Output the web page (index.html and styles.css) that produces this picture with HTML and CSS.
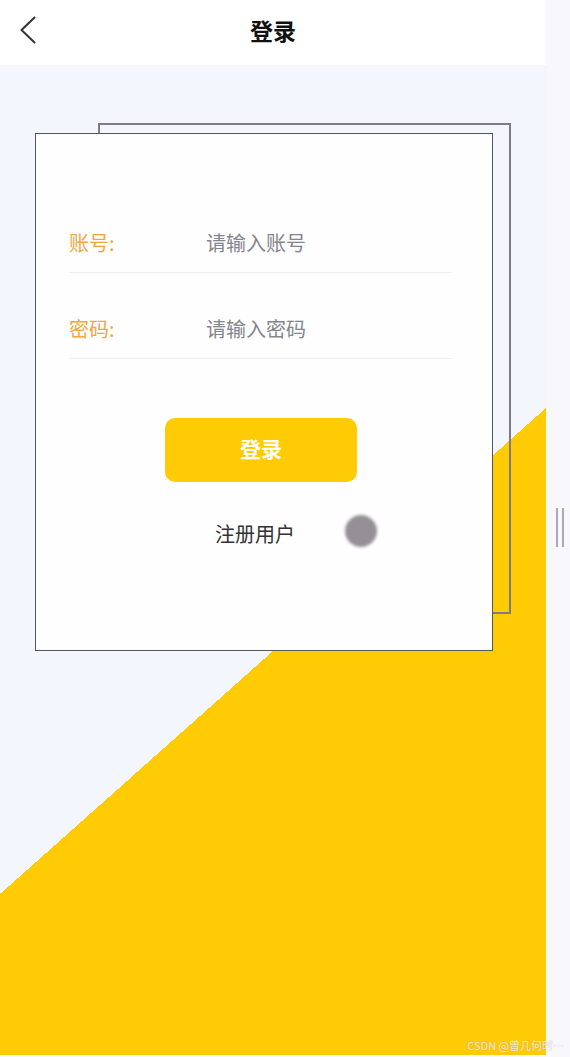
FILE: index.html
```html
<!DOCTYPE html>
<html lang="zh-CN">
<head>
<meta charset="utf-8">
<title>登录</title>
<link rel="stylesheet" href="styles.css">
</head>
<body>
<div class="page">
  <div class="app">
    <header class="header">
      <div class="back">
        <svg width="18" height="28" viewBox="0 0 18 28"><path d="M15.5 1.5 L2.5 14 L15.5 26.5" fill="none" stroke="#333" stroke-width="2" stroke-linecap="round" stroke-linejoin="round"/></svg>
      </div>
      <h1 class="title">登录</h1>
      <div></div>
    </header>
    <main class="content">
      <div class="stack">
        <div class="card-back"></div>
        <div class="card">
          <div class="form">
            <div class="row">
              <span class="label">账号:</span>
              <span class="placeholder">请输入账号</span>
            </div>
            <div class="row row-second">
              <span class="label">密码:</span>
              <span class="placeholder">请输入密码</span>
            </div>
            <button class="btn">登录</button>
            <div class="register">
              <span class="register-text">注册用户</span>
              <span class="dot"></span>
            </div>
          </div>
        </div>
      </div>
    </main>
  </div>
  <div class="side">
    <div class="handle"></div>
  </div>
  <div class="watermark">CSDN @曾几何时…</div>
</div>
</body>
</html>
```
FILE: styles.css
```css
* { box-sizing: border-box; }
html, body { margin: 0; padding: 0; }
body {
  background: #f7f7fc;
  font-family: "Noto Sans CJK SC", "Noto Sans", sans-serif;
  color: #333;
}
.page {
  position: relative;
  display: flex;
  width: 570px;
  height: 1057px;
  overflow: hidden;
}
.app {
  width: 546px;
  height: 1055px;
  display: flex;
  flex-direction: column;
}
.header {
  height: 65px;
  background: #ffffff;
  display: grid;
  grid-template-columns: 1fr auto 1fr;
  align-items: center;
}
.back {
  padding-left: 19px;
  display: flex;
  align-items: center;
  height: 28px;
  margin-top: -5px;
}
.title {
  margin: 0;
  font-size: 23px;
  font-weight: 700;
  color: #111;
  line-height: 1;
  margin-top: -5px;
}
.content {
  flex: 1;
  background:
    linear-gradient(to bottom right, rgba(255,204,0,0) 50%, #ffcb05 50%) no-repeat 0 343px / 546px 486px,
    linear-gradient(#ffcb05, #ffcb05) no-repeat 0 828px / 100% 100%,
    #f3f6fc;
}
.stack {
  position: relative;
  margin: 58px 0 0 35px;
  padding-top: 10px;
  width: 476px;
}
.card-back {
  position: absolute;
  left: 63px;
  top: 0;
  width: 413px;
  height: 491px;
  border: 2px solid #7c7c82;
}
.card {
  position: relative;
  width: 458px;
  height: 518px;
  background: #fefefe;
  border: 1px solid #55555c;
}
.form {
  padding: 78px 40px 0 33px;
}
.row {
  display: flex;
  align-items: center;
  height: 61px;
  border-bottom: 1px solid #eeeef2;
  font-size: 20px;
}
.row-second { margin-top: 25px; }
.label {
  width: 137px;
  color: #f3a63c;
}
.placeholder {
  color: #85858d;
}
.btn {
  display: block;
  margin: 59px 0 0 96px;
  padding: 0 0 5px;
  width: 192px;
  height: 64px;
  border: none;
  border-radius: 10px;
  background: #ffcb05;
  color: #ffffff;
  font-family: inherit;
  font-size: 21px;
  font-weight: 700;
}
.register {
  display: flex;
  align-items: center;
  margin: 31px 0 0 146px;
  height: 40px;
}
.register-text {
  font-size: 20px;
  color: #333;
}
.dot {
  margin-left: 50px;
  margin-top: -4px;
  width: 32px;
  height: 32px;
  border-radius: 50%;
  background: #958f96;
  filter: blur(1.5px);
}
.side {
  position: relative;
  width: 24px;
  height: 1057px;
  background: #f7f7fc;
}
.handle {
  position: absolute;
  left: 10px;
  top: 508px;
  width: 8px;
  height: 39px;
  border-left: 2px solid #aaa8b0;
  border-right: 2px solid #aaa8b0;
}
.watermark {
  position: absolute;
  right: 6px;
  bottom: 4px;
  font-size: 11px;
  color: rgba(255,255,255,0.8);
  text-shadow: 0 0 1px rgba(120,120,120,0.5);
  font-family: "Noto Sans CJK SC", "Liberation Sans", sans-serif;
}
```
